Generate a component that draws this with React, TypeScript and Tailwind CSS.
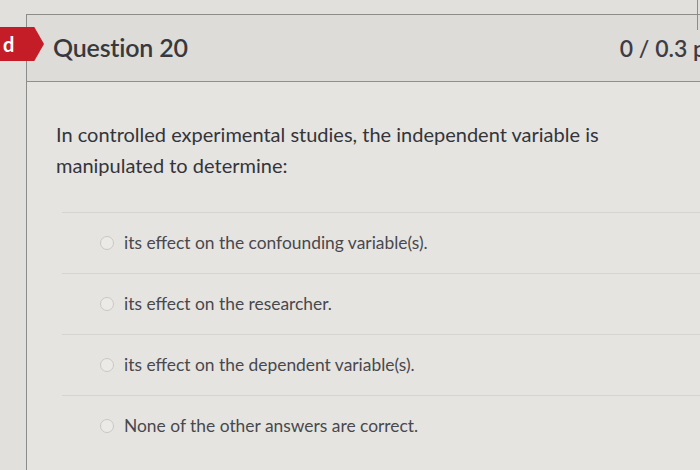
const options = [
  'its effect on the confounding variable(s).',
  'its effect on the researcher.',
  'its effect on the dependent variable(s).',
  'None of the other answers are correct.',
]

const Radio = () => (
  <span className="inline-block h-[14px] w-[14px] shrink-0 rounded-full border border-[#c9c8c5] bg-[#eceae7]" />
)

const App = () => {
  return (
    <div
      className="relative h-[470px] w-[700px] overflow-hidden bg-[#e1e0dd] pt-[14px] pl-[26px]"
      style={{ fontFamily: 'Lato, "Open Sans", sans-serif' }}
    >
      {/* card */}
      <div className="h-full border-t border-l border-[#8c8c8a] bg-[#e5e4e1]">
        {/* header */}
        <div className="flex h-[67px] items-center justify-between border-b border-[#8f8f8d] bg-[#dddcd9] pl-[26px]">
          <h2 className="text-[25px] font-semibold tracking-[-0.2px] text-[#38383d]">Question 20</h2>
          <span className="mr-[-6px] whitespace-nowrap text-[23px] font-semibold text-[#3d3d42]">0 / 0.3 p</span>
        </div>

        {/* body */}
        <div className="pt-[37px] pl-[29px]">
          <p className="w-[580px] text-[20px] leading-[31px] text-[#34343a]">
            In controlled experimental studies, the independent variable is manipulated to determine:
          </p>

          <ul className="mt-[31px] ml-[6px]">
            {options.map((o) => (
              <li key={o} className="flex h-[61px] items-center gap-[10px] border-t border-[#d5d4d1] pl-[38px]">
                <Radio />
                <span className="text-[17.4px] text-[#48484d]">{o}</span>
              </li>
            ))}
          </ul>
        </div>
      </div>

      {/* red tag */}
      <div className="absolute left-0 top-[27px] flex h-[34px] w-[44px] items-center bg-[#c41d28] pl-[3px] [clip-path:polygon(0_0,78%_0,100%_50%,78%_100%,0_100%)]">
        <span className="text-[20px] font-bold leading-none text-white">d</span>
      </div>

      {/* corner edge top right */}
      <div className="absolute right-0 top-0 h-[30px] w-[3px] border-l border-[#8c8c8a]" />
    </div>
  )
}

export default App
